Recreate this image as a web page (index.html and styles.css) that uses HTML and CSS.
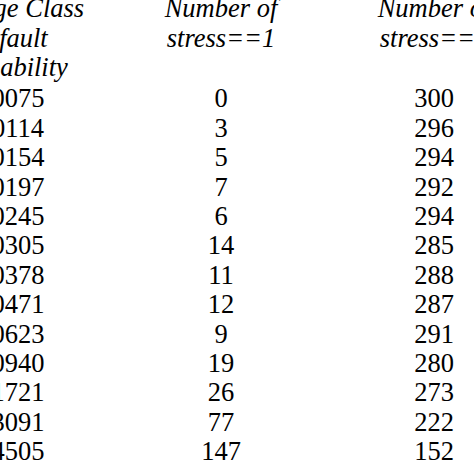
FILE: index.html
```html
<!DOCTYPE html>
<html>
<head>
<meta charset="utf-8">
<link rel="stylesheet" href="styles.css">
</head>
<body>
<div class="table">
  <div class="cell head">Average Class<br>Default<br>Probability</div>
  <div class="cell head">Number of<br>stress==1</div>
  <div class="cell head">Number of<br>stress==0</div>

  <div class="cell">0.0075</div><div class="cell">0</div><div class="cell">300</div>
  <div class="cell">0.0114</div><div class="cell">3</div><div class="cell">296</div>
  <div class="cell">0.0154</div><div class="cell">5</div><div class="cell">294</div>
  <div class="cell">0.0197</div><div class="cell">7</div><div class="cell">292</div>
  <div class="cell">0.0245</div><div class="cell">6</div><div class="cell">294</div>
  <div class="cell">0.0305</div><div class="cell">14</div><div class="cell">285</div>
  <div class="cell">0.0378</div><div class="cell">11</div><div class="cell">288</div>
  <div class="cell">0.0471</div><div class="cell">12</div><div class="cell">287</div>
  <div class="cell">0.0623</div><div class="cell">9</div><div class="cell">291</div>
  <div class="cell">0.0940</div><div class="cell">19</div><div class="cell">280</div>
  <div class="cell">0.1721</div><div class="cell">26</div><div class="cell">273</div>
  <div class="cell">0.3091</div><div class="cell">77</div><div class="cell">222</div>
  <div class="cell">0.4505</div><div class="cell">147</div><div class="cell">152</div>
</div>
</body>
</html>
```
FILE: styles.css
```css
html, body {
  margin: 0;
  padding: 0;
  overflow: hidden;
  background: #ffffff;
}

.table {
  display: grid;
  grid-template-columns: repeat(3, 213px);
  margin-left: -98.5px;
  margin-top: -5.6px;
  font-family: "Liberation Serif", "Times New Roman", serif;
  font-size: 26.5px;
  line-height: 29.4px;
  color: #000000;
}

.cell {
  text-align: center;
  white-space: nowrap;
}

.head {
  font-style: italic;
  padding-bottom: 1.8px;
}
```
